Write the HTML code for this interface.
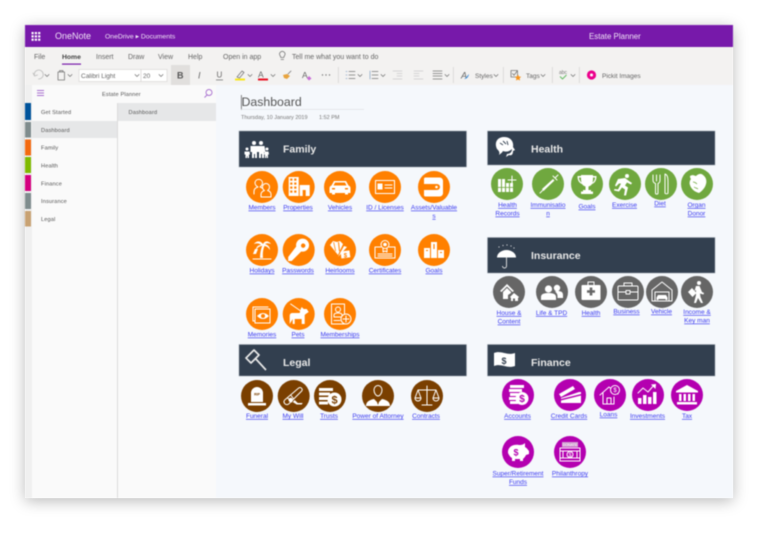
<!DOCTYPE html>
<html><head><meta charset="utf-8"><title>Estate Planner</title>
<style>
html,body{margin:0;padding:0;background:#fff;width:768px;height:533px;overflow:hidden}
#shadow{position:absolute;left:25px;top:25px;width:708px;height:473px;box-shadow:0 3px 14px rgba(0,0,0,.28)}
#root{position:absolute;left:0;top:0;width:768px;height:533px;filter:blur(.5px)}
svg{display:block}
text{font-family:"Liberation Sans",sans-serif}
.rb{font-size:7px;fill:#666}
.tb{font-size:6.5px;fill:#666}
.side{font-size:5.6px;fill:#555;letter-spacing:.15px}
.h{font-size:10.5px;font-weight:bold;fill:#e8e8e8}
.l{font-size:6.5px;fill:#3b3bf0;text-decoration:underline;text-anchor:middle}
.w{fill:#fff}
.s{fill:none;stroke:#fff;stroke-width:1;stroke-linecap:round;stroke-linejoin:round}
.c{fill:none;stroke:#777;stroke-width:.8;stroke-linecap:round;stroke-linejoin:round}
.o{fill:#ff8000}.b{fill:#7a3f00}.g{fill:#70a83f}.d{fill:#666}.m{fill:#b400b0}
</style></head><body>
<div id="shadow"></div>
<div id="root">
<svg width="768" height="533" viewBox="0 0 768 533" xmlns="http://www.w3.org/2000/svg">
<!-- window -->
<rect x="25" y="25" width="708" height="473" fill="#f5f8fc"/>
<rect x="25" y="25" width="708" height="22" fill="#7719aa"/>
<rect x="25" y="47" width="708" height="38" fill="#f3f2f1"/>
<!-- waffle -->
<g fill="#fff"><rect x="31.500" y="32" width="2.200" height="2.200"/><rect x="34.800" y="32" width="2.200" height="2.200"/><rect x="38.100" y="32" width="2.200" height="2.200"/><rect x="31.500" y="35.300" width="2.200" height="2.200"/><rect x="34.800" y="35.300" width="2.200" height="2.200"/><rect x="38.100" y="35.300" width="2.200" height="2.200"/><rect x="31.500" y="38.600" width="2.200" height="2.200"/><rect x="34.800" y="38.600" width="2.200" height="2.200"/><rect x="38.100" y="38.600" width="2.200" height="2.200"/></g>
<text x="55" y="39" font-size="9" fill="#f0e4f6">OneNote</text>
<text x="105" y="38.500" font-size="6.800" fill="#f0e4f6">OneDrive ▸ Documents</text>
<text x="589" y="39" font-size="7.900" fill="#f0e4f6">Estate Planner</text>
<!-- ribbon tabs -->
<text class="rb" x="34" y="59">File</text>
<text class="rb" x="62" y="59" style="fill:#444;font-weight:bold;font-size:6.800px">Home</text>
<rect x="62" y="63.500" width="19" height="1.200" fill="#7719aa"/>
<text class="rb" x="96" y="59">Insert</text>
<text class="rb" x="128" y="59">Draw</text>
<text class="rb" x="158" y="59">View</text>
<text class="rb" x="188" y="59">Help</text>
<text class="rb" x="223" y="59">Open in app</text>
<path class="c" d="M280 55.500a2.700 2.700 0 1 1 4.600 0c-.5.7-.8 1.200-.8 2h-3c0-.8-.3-1.300-.8-2zM281 59.500h2.600"/>
<text class="rb" x="292" y="59">Tell me what you want to do</text>
<!-- toolbar -->
<path class="c" d="M33 73l1.500 3 3-1M34.500 76a4.500 4.500 0 1 1 4 3" style="stroke:#bbb"/>
<path class="c" d="M45 74.500l2 2 2-2"/>
<path class="c" d="M58 72h6.500v8H58zM59.500 72v-1.300h3.500V72"/>
<path class="c" d="M68 74.500l2 2 2-2"/>
<rect x="79" y="69.500" width="62" height="12" fill="#fff" stroke="#d5d3d1" stroke-width=".6"/>
<text class="tb" x="81" y="78">Calibri Light</text>
<path class="c" d="M135 74.500l2 2 2-2"/>
<rect x="141" y="69.500" width="26" height="12" fill="#fff" stroke="#d5d3d1" stroke-width=".6"/>
<text class="tb" x="143" y="78">20</text>
<path class="c" d="M159 74.500l2 2 2-2"/>
<rect x="171" y="65" width="19" height="20" fill="#e1dfdd"/>
<text x="177" y="78.500" font-size="9" font-weight="bold" fill="#555">B</text>
<text x="198" y="78.500" font-size="9" font-style="italic" fill="#666">I</text>
<text x="216.500" y="77.500" font-size="8" fill="#666">U</text>
<rect x="216" y="79.500" width="7" height=".8" fill="#777"/>
<path class="c" d="M237 77l5-6 2 1.500-4.500 5.500z"/><rect x="235" y="78.500" width="10" height="2" fill="#f8e71c"/>
<path class="c" d="M248 74.500l2 2 2-2"/>
<text x="258" y="77.500" font-size="8.500" fill="#666">A</text><rect x="258" y="78.500" width="10" height="2" fill="#e81123"/>
<path class="c" d="M271 74.500l2 2 2-2"/>
<path d="M283 75l4-1 3 2-3 3-3-1z" fill="#e8a33d"/><path class="c" d="M288 74l3-3"/>
<text x="302" y="78" font-size="8.500" fill="#666">A</text><path d="M309 76l2.500 2.500-2.500 2-2-2z" fill="#c86dd7"/>
<g fill="#777"><circle cx="322.500" cy="75" r=".7"/><circle cx="326" cy="75" r=".7"/><circle cx="329.500" cy="75" r=".7"/></g>
<rect x="338" y="67" width=".7" height="16" fill="#d5d3d1"/>
<path class="c" style="stroke:#8fa9c9" d="M346 71.500h1M346 75h1M346 78.500h1"/><path class="c" d="M349 71.500h6M349 75h6M349 78.500h6"/>
<path class="c" d="M358 74.500l2 2 2-2"/>
<path class="c" style="stroke:#8fa9c9" d="M370 71v8"/><path class="c" d="M372 71.500h6M372 75h6M372 78.500h6"/>
<path class="c" d="M381 74.500l2 2 2-2"/>
<path class="c" style="stroke:#ccc" d="M393 71h9M397 73.500h5M397 76h5M393 79h9"/>
<path class="c" style="stroke:#ccc" d="M414 71h9M414 73.500h5M414 76h5M414 79h9"/>
<path class="c" d="M433 71h9M433 73.500h9M433 76h9M433 79h9"/>
<path class="c" d="M445 74.500l2 2 2-2"/>
<rect x="453" y="67" width=".7" height="16" fill="#d5d3d1"/>
<text x="461" y="78.500" font-size="9" font-style="italic" fill="#666">A</text><path d="M464 79c2-1 3-3 5-5-.5 3-2 5-5 5z" fill="#3d8ed8"/>
<text class="tb" x="475" y="78">Styles</text>
<path class="c" d="M494 74.500l2 2 2-2"/>
<rect x="503" y="67" width=".7" height="16" fill="#d5d3d1"/>
<path class="c" d="M511 70.500h6.500v6.500H511zM512.500 73.500l1.500 1.800 3-4"/><path d="M518 74.500l1 2 2.200.3-1.600 1.500.4 2.200-2-1-2 1 .4-2.200-1.600-1.500 2.200-.3z" fill="#f7941d"/>
<text class="tb" x="526" y="78">Tags</text>
<path class="c" d="M541 74.500l2 2 2-2"/>
<rect x="552" y="67" width=".7" height="16" fill="#d5d3d1"/>
<text x="559" y="74" font-size="5" fill="#777">abc</text><path d="M560 76.500l2.500 2.500 4-4" fill="none" stroke="#5cb85c" stroke-width=".9"/>
<path class="c" d="M571 74.500l2 2 2-2"/>
<rect x="579" y="67" width=".7" height="16" fill="#d5d3d1"/>
<circle cx="591.500" cy="75" r="4.600" fill="#ec008c"/><circle cx="591.500" cy="75" r="1.500" fill="#fff"/>
<text class="tb" x="602" y="78">Pickit Images</text>

<!-- side panels -->
<rect x="25" y="85" width="7" height="413" fill="#f0f0f0"/>
<rect x="32" y="85" width="184" height="413" fill="#fafafa"/>
<rect x="117" y="103" width="1" height="395" fill="#dcdcdc"/>
<rect x="25" y="103" width="6" height="17" fill="#00539b"/>
<rect x="25" y="122" width="6" height="15.500" fill="#7f8c8d"/>
<rect x="25" y="139.500" width="6" height="16" fill="#f36a10"/>
<rect x="25" y="157" width="6" height="16" fill="#7fba00"/>
<rect x="25" y="175" width="6" height="16" fill="#d4007f"/>
<rect x="25" y="193" width="6" height="16" fill="#7f8c8d"/>
<rect x="25" y="211" width="6" height="15.500" fill="#c8a273"/>
<path d="M37 90.500h7M37 93h7M37 95.500h7" stroke="#a86fcf" stroke-width=".9"/>
<text class="side" x="102" y="96">Estate Planner</text>
<circle cx="209" cy="92.500" r="3" fill="none" stroke="#a86fcf" stroke-width=".9"/><path d="M207 95l-2.500 2.500" stroke="#a86fcf" stroke-width=".9"/>
<rect x="32" y="121" width="85" height="17" fill="#e6e7e8"/>
<rect x="118" y="103" width="98" height="18" fill="#e6e7e8"/>
<text class="side" x="41" y="114">Get Started</text>
<text class="side" x="41" y="132">Dashboard</text>
<text class="side" x="41" y="149.500">Family</text>
<text class="side" x="41" y="167.500">Health</text>
<text class="side" x="41" y="185.500">Finance</text>
<text class="side" x="41" y="203">Insurance</text>
<text class="side" x="41" y="221">Legal</text>
<text class="side" x="128.500" y="114">Dashboard</text>

<!-- page title -->
<rect x="241" y="95" width=".7" height="15" fill="#555"/>
<text x="241.500" y="106" font-size="12.300" fill="#555">Dashboard</text>
<rect x="241" y="109" width="123" height=".7" fill="#dfe2e6"/>
<text x="241" y="119" font-size="5.500" fill="#777">Thursday, 10 January 2019</text>
<text x="319" y="119" font-size="5.500" fill="#777">1:52 PM</text>

<!-- FAMILY -->
<rect x="239" y="131" width="227.500" height="36" fill="#323f4f" stroke="#9aa3ad" stroke-width=".5"/>
<g class="w"><circle cx="254" cy="143" r="2"/><path d="M250.500 146h7l1 6h-1.500v6h-2v-4h-1v4h-2v-6h-1.500z"/><circle cx="261" cy="143" r="2"/><path d="M257.500 146h7l1 6h-1.500v6h-2v-4h-1v4h-2v-6h-1.500z"/><circle cx="247" cy="149" r="1.500"/><path d="M244.500 151.500h5l.5 3h-1v3.500h-1.500v-2h-.5v2H245.500v-3.500h-1z"/><circle cx="267" cy="149" r="1.500"/><path d="M264.500 151.500h4l.5 3h-1v3.500h-1.300v-2h-.5v2h-1.300v-3.500h-.9z"/></g>
<text class="h" x="283" y="152.500">Family</text>

<g transform="translate(262,187)"><circle r="16" class="o"/><path class="s" d="M-8 7v-2.500c0-2.500 2-4 4-4.500-2-1-3-2.500-3-4.500a3.800 3.800 0 0 1 7.500 0c0 2-1 3.500-2.500 4.500 1 .3 2 .8 2.500 1.500"/><path class="s" d="M-1 10v-2.500c0-2.500 2-3.500 3.500-4-1.300-.8-2-2-2-3.500a3.500 3.500 0 0 1 7 0c0 1.500-.7 2.700-2 3.500 1.800.5 3.500 1.500 3.500 4V10z"/></g>
<g transform="translate(298.700,187)"><circle r="16" class="o"/><path class="w" d="M-10-10H0v19h-10zM1-2H11V9H7V3H4v6H1z"/><g class="o"><rect x="-8.500" y="-8.500" width="2.200" height="2.200"/><rect x="-4.500" y="-8.500" width="2.200" height="2.200"/><rect x="-8.500" y="-4.500" width="2.200" height="2.200"/><rect x="-4.500" y="-4.500" width="2.200" height="2.200"/><rect x="-8.500" y="-.5" width="2.200" height="2.200"/><rect x="-4.500" y="-.5" width="2.200" height="2.200"/><rect x="-8.500" y="3.500" width="2.200" height="2.200"/><rect x="-4.500" y="3.500" width="2.200" height="2.200"/></g></g>
<g transform="translate(340,187)"><circle r="16" class="o"/><path class="w" d="M-6-6h12l2.500 4.500c1.500.5 2 1.500 2 3V6H8v1.500H5V6H-5v1.500H-8V6h-2.500V1.500c0-1.500.5-2.500 2-3z"/><path class="o" d="M-5-4.500H5L6.500-1.500h-13zM-8 1h3v1.500h-3zM5 1h3v1.500H5z"/></g>
<g transform="translate(385,187)"><circle r="16" class="o"/><rect x="-9.500" y="-6.500" width="19" height="13" class="s"/><path class="w" d="M-7.500-3.500h5v6h-5z"/><path class="s" d="M0-2h7M0 1h7"/></g>
<g transform="translate(434,187)"><circle r="16" class="o"/><path class="w" d="M-10-8q0-1.500 1.500-1.500h14c2 0 3.500 1.500 3.500 3.500v12c0 2-1.500 3.500-3.500 3.500h-14q-1.500 0-1.500-1.500z"/><path class="o" d="M-10-3H3a3 3 0 0 1 0 6h-13z" stroke="#fff" stroke-width="0"/><circle cx="2.500" r="1.300" class="w"/></g>
<text class="l" x="262" y="209.500">Members</text>
<text class="l" x="298" y="209.500">Properties</text>
<text class="l" x="340" y="209.500">Vehicles</text>
<text class="l" x="385" y="209.500">ID / Licenses</text>
<text class="l" x="434" y="209.500">Assets/Valuable</text>
<text class="l" x="434" y="218">s</text>

<g transform="translate(262,250)"><circle r="16" class="o"/><path class="w" d="M-2 8C-2 3-1-2 1-6L3-5C1-1 .5 3 1 8zM1-6C-2-10-6-9-8-6-5-7-3-7-1-5-4-5-6-3-6 0-4-3-2-4 0-4zM1-6C3-10 7-9 9-6 6-7 5-7 3-6 6-5 8-3 8 0 6-3 4-4 2-4z"/><path class="s" d="M-9 9H9"/><path class="w" d="M-7-1h3l-2 5h-3z"/></g>
<g transform="translate(298.700,250)"><circle r="16" class="o"/><path class="w" d="M-2.500-3.500a6.500 6.500 0 1 1 5 5L-7 11h-3.500V7zM3-6a2.200 2.200 0 1 0 3.500 2.500A2.200 2.200 0 0 0 3-6z" fill-rule="evenodd"/></g>
<g transform="translate(340,250)"><circle r="16" class="o"/><path class="w" d="M-10-5l3-4 4 1 3-1 3 3-5 11zM-2 7L4-4l3 1z"/><path class="o" d="M-6-8l2 9-.7.2-2-9zM-1-8l1 9-1 .3-1-9z"/><rect x="1" y="1" width="9" height="7" class="w" transform="rotate(-8 5 5)"/><text x="3.800" y="7.500" font-size="6" font-weight="bold" fill="#ff8000">$</text></g>
<g transform="translate(385,250)"><circle r="16" class="o"/><path class="s" d="M-10-3H-4M4-3H10V8H-10V-3"/><circle cy="-5.500" r="4" class="s"/><circle cy="-5.500" r="1.800" class="w"/><path class="s" d="M-2-2v4L0 1l2 1v-4M-7 4H7M-7 6H7"/></g>
<g transform="translate(434,250)"><circle r="16" class="o"/><path class="w" d="M-3-8H3V8H-3zM-10-2H-4V8H-10zM4 0H10V8H4z"/><g fill="#ff8000"><rect x="-.6" y="-6" width="1.200" height="5"/><rect x="-8" y="0" width="2" height="1"/><rect x="6" y="2" width="2" height="1"/></g></g>
<text class="l" x="262" y="272.500">Holidays</text>
<text class="l" x="298" y="272.500">Passwords</text>
<text class="l" x="340" y="272.500">Heirlooms</text>
<text class="l" x="385" y="272.500">Certificates</text>
<text class="l" x="434" y="272.500">Goals</text>

<g transform="translate(262,314)"><circle r="16" class="o"/><path class="s" d="M-9-7H6M-9-7V7M-9 7h2"/><rect x="-7" y="-5" width="15" height="14" class="s"/><path class="w" d="M-5 2Q1-4 7 2 1 8-5 2z"/><circle cx="1" cy="2" r="2" class="o"/></g>
<g transform="translate(298.700,314)"><circle r="16" class="o"/><path class="w" d="M-9 10V2c0-2 1-3 3-3H1L2-5 3-7 5-5H8L10-2 7 0 6 1V10H3V5H-4V10H-6V5L-9 10z"/><path class="s" d="M-8-10L2-3"/></g>
<g transform="translate(340,314)"><circle r="16" class="o"/><rect x="-8.500" y="-10" width="13" height="20" class="s"/><circle cx="-2" cy="-4.500" r="2.500" class="s"/><path class="s" d="M-6 3v-2c0-1.500 2-2 4-2s4 .5 4 2v2zM-6 6.500H0"/><circle cx="6" cy="5" r="5" fill="#ff8000" stroke="#fff" stroke-width="1"/><path class="s" d="M3 5h6M6 2v6"/></g>
<text class="l" x="262" y="336.500">Memories</text>
<text class="l" x="298" y="336.500">Pets</text>
<text class="l" x="340" y="336.500">Memberships</text>

<!-- LEGAL -->
<rect x="239" y="344.500" width="227.500" height="31.500" fill="#323f4f" stroke="#9aa3ad" stroke-width=".5"/>
<path d="M246 358l8-8 5 5-8 8zM255 358l11 12" fill="none" stroke="#e8e8e8" stroke-width="1.700" stroke-linejoin="round"/>
<text class="h" x="283" y="366">Legal</text>

<g transform="translate(257,396)"><circle r="16" class="b"/><path class="w" d="M-6 6V-3a6 6 0 0 1 12 0V6zM-9 7H9v2.500H-9z"/><text x="0" y="-.5" font-size="3.500" font-weight="bold" fill="#7a3f00" text-anchor="middle">RIP</text></g>
<g transform="translate(293.700,396)"><circle r="16" class="b"/><path class="s" d="M-9 4L5-8c2-1.500 4.500 1 3 3L-5 8c-3 2-6-1.500-4-4zM-6 2l4 4M-3-1l3 4"/><path class="w" d="M-1 6l2-2 3 3 5 0-1 1.500-5 0z"/><circle cx="-3" cy="4" r="2.200" class="w"/></g>
<g transform="translate(330,396)"><circle r="16" class="b"/><path class="w" d="M-11-8H3v3h-14zM-11-3.500H0v3h-11zM-11 1H-2v3h-9zM-11 5.500H-2v3h-9z"/><circle cx="4.500" cy="3.500" r="7" class="w"/><text x="4.500" y="7.500" font-size="11" font-weight="bold" fill="#7a3f00" text-anchor="middle">$</text></g>
<g transform="translate(378,396)"><circle r="16" class="b"/><path class="s" d="M-4-6a4 4.500 0 0 1 8 0c0 3-2 6-4 6s-4-3-4-6z" stroke-width="1.200"/><path class="w" d="M-12 10c0-4 3-6 8-7l4 4 4-4c5 1 8 3 8 7z"/><path class="b" d="M-1 6h2L0 9z"/></g>
<g transform="translate(427,396)"><circle r="16" class="b"/><path class="s" d="M0-10V9M-5 9H5M-9-6H9M-9-6l-3 8M-9-6l3 8M9-6l-3 8M9-6l3 8M-12 2a3 3 0 0 0 6 0zM6 2a3 3 0 0 0 6 0z" stroke-width=".9"/></g>
<text class="l" x="257" y="418">Funeral</text>
<text class="l" x="293" y="418">My Will</text>
<text class="l" x="329" y="418">Trusts</text>
<text class="l" x="378" y="418">Power of Attorney</text>
<text class="l" x="426" y="418">Contracts</text>

<!-- HEALTH -->
<rect x="487.500" y="131" width="227.500" height="34" fill="#323f4f" stroke="#9aa3ad" stroke-width=".5"/>
<g transform="translate(0,2)"><path class="w" d="M497 147c-3-6 0-12 7-12 6 0 10 4 9 10l2 3-2 1c0 3-1 5-4 4l-3 2 1-3c3 0 5-2 5-5-3 3-7 3-9 2-1 2-3 3-4 4 1-3 0-4-2-6z"/><path d="M500 141l3 2M503 139l3 3M507 139l1 4" stroke="#323f4f" stroke-width=".9" fill="none"/></g>
<text class="h" x="531" y="152.500">Health</text>

<g transform="translate(507,184)"><circle r="16" class="g"/><path class="w" d="M-9-5h3v13h-3zM-5-5h3v13h-3zM-1-1h3V8h-3zM3-1h3V8H3z"/><g fill="#70a83f"><rect x="-9" y="3" width="7" height=".8"/><rect x="-1" y="3" width="7" height=".8"/></g><path class="s" d="M5-8V0M1-4H9" stroke-width="1.600"/></g>
<g transform="translate(548,184)"><circle r="16" class="g"/><path class="w" d="M-6 5L5-5 6.500-3.500-4.500 7z"/><path class="s" d="M5-8l4 4M7-6l3-3M-5 6l-3 3" stroke-width=".9"/></g>
<g transform="translate(587,184)"><circle r="16" class="g"/><path class="w" d="M-6-9H6v1h3.500c0 5-2 7-4.500 8-1 1.500-2 2-3.500 2.500V6H4v1.500h2V10H-6V7.500h2V6h2.500V2.500C-3 2-4 1.500-5 0c-2.500-1-4.500-3-4.500-8H-6zM-8-6.500c0 2 1 4 2.500 5C-6-3-6-5-6-6.500zM8-6.500H6c0 1.500 0 3.500-.5 5C7-2.500 8-4.500 8-6.500z" fill-rule="evenodd"/></g>
<g transform="translate(625,184)"><circle r="16" class="g"/><circle cx="2" cy="-8" r="2" class="w"/><path class="w" d="M-7-5l7-1 4 3 3 2-1 1.500-4-2-2 3 3 2-2 8H-1l1-6-3-2-3 4-5-1 .5-1.500 3.500.5 3-6-2 0-3 3-1-1z"/></g>
<g transform="translate(661,184)"><circle r="16" class="g"/><path class="s" d="M-8-9v5c0 2 1 3 2.500 3.500V9c0 1.500 2.500 1.500 2.500 0V-.5C-1.500-1-1-2-1-4V-9M-4.500-9v6" stroke-width=".9"/><path class="s" d="M4-10c3 1 3 5 3 9v10c0 1-3 1-3 0z" stroke-width="1.100"/></g>
<g transform="translate(697,184)"><circle r="16" class="g"/><path class="w" d="M-7-8c3-2 5 0 6 0 2-2 5-3 7-1 3 2 4 6 3 9-1 4-4 7-7 9-4-1-8-4-9-8-1-2 0-5 1-6-1-1-1-2-1-3z"/><path d="M-3 3c1 1 3 1 4 2M-4-2c2 0 3 1 4 2" stroke="#70a83f" stroke-width=".7" fill="none"/></g>
<text class="l" x="507.500" y="207">Health</text>
<text class="l" x="507.500" y="215.500">Records</text>
<text class="l" x="548" y="207">Immunisatio</text>
<text class="l" x="548" y="215.500">n</text>
<text class="l" x="587" y="208.500">Goals</text>
<text class="l" x="624.500" y="207">Exercise</text>
<text class="l" x="660" y="205.500">Diet</text>
<text class="l" x="696.500" y="207">Organ</text>
<text class="l" x="696.500" y="215.500">Donor</text>

<!-- INSURANCE -->
<rect x="487.500" y="237.500" width="227.500" height="35.500" fill="#323f4f" stroke="#9aa3ad" stroke-width=".5"/>
<path class="w" d="M497 257.500a9.500 7.500 0 0 1 19 0z"/><path d="M506.500 257v9a2 2 0 0 1-4 0" fill="none" stroke="#e8e8e8" stroke-width=".9"/>
<g fill="#ddd"><circle cx="499" cy="247" r=".6"/><circle cx="503" cy="245.500" r=".6"/><circle cx="507" cy="245" r=".6"/><circle cx="511" cy="246" r=".6"/><circle cx="514" cy="248" r=".6"/></g>
<text class="h" x="531" y="259">Insurance</text>

<g transform="translate(509,292)"><circle r="16" class="d"/><path class="w" d="M-9-1L-2-8 5-1l-1.500 1L-2-5.500-7.500 0zM-6 0L-2-4 2 0v1L-1 3V7H-6zM1 5l4-4 5 4-1 1V9H2V6z"/><rect x="4" y="6.500" width="2" height="2.500" class="d"/></g>
<g transform="translate(552,292)"><circle r="16" class="d"/><circle cx="-3.500" cy="-3" r="3.600" class="w"/><circle cx="5" cy="-4" r="3.200" class="w"/><path class="w" d="M-11 8V5c0-3 3-4 7.500-4S4 2 4 5v3zM5.500 6V4C5.500 2 4.500 1 3-.5 4-1 4.500-1 5.500-1 9-1 11 0 11 3v3z"/></g>
<g transform="translate(591,292)"><circle r="16" class="d"/><path class="s" d="M-3-7V-10H3V-7"/><rect x="-9.500" y="-7" width="19" height="15" rx="1" class="w"/><path class="d" d="M-1.300-4.500h2.600v2.700H4v2.600H1.300v2.700H-1.300V.8H-4V-1.800h2.700z" fill="#666"/></g>
<g transform="translate(628,292)"><circle r="16" class="d"/><rect x="-10" y="-6" width="20" height="14" rx="1" class="s"/><path class="s" d="M-4-6V-9H4V-6M-10 0H-2M2 0H10"/><rect x="-2" y="-1.500" width="4" height="3.500" class="s"/></g>
<g transform="translate(662,292)"><circle r="16" class="d"/><path class="s" d="M-10-2L0-10 10-2V9H-10zM-7 9V0H7V9"/><path class="w" d="M-4 3h8l1.500 2.500V8H3.500V7H-3.500v1H-5.500V5.500z"/></g>
<g transform="translate(697,292)"><circle r="16" class="d"/><circle cx="2" cy="-9" r="2" class="w"/><path class="w" d="M-1-6h3.500L5 0l2 1-.5 1.500L3 1.500 3.500 5 6 11H4L1 6 -1 11h-2L-1 3v-5l-1.500 1zM-9 0l4-4 4.500 5-4 4z"/></g>
<text class="l" x="509" y="315">House &amp;</text>
<text class="l" x="509" y="323.500">Content</text>
<text class="l" x="551.500" y="315">Life &amp; TPD</text>
<text class="l" x="591" y="315">Health</text>
<text class="l" x="626.500" y="313.500">Business</text>
<text class="l" x="661.500" y="313.500">Vehicle</text>
<text class="l" x="697" y="314">Income &amp;</text>
<text class="l" x="697" y="322.500">Key man</text>

<!-- FINANCE -->
<rect x="487.500" y="344.500" width="227.500" height="31.500" fill="#323f4f" stroke="#9aa3ad" stroke-width=".5"/>
<path class="w" d="M494 353c7-3 13 3 21 0v13c-8 3-14-3-21 0z"/><text x="501.500" y="364" font-size="9" font-weight="bold" fill="#323f4f">$</text>
<text class="h" x="531" y="366">Finance</text>

<g transform="translate(518,395)"><circle r="16" class="m"/><path class="w" d="M-8-10H6v3h-14zM-9-6H4v3h-13zM-8-2H0v3h-8zM-9 2h8v3h-8zM-8 6h8v3h-8z"/><circle cx="4" cy="3.500" r="6.500" class="w"/><text x="4" y="7" font-size="10" font-weight="bold" fill="#b400b0" text-anchor="middle">$</text></g>
<g transform="translate(570,395)"><circle r="16" class="m"/><path class="w" d="M-11-1L3-9 5-6-9 2zM-9 3L9-3h2V8H-9z"/><path fill="#b400b0" d="M-9 4L11-1v1.500L-9 5.500z"/></g>
<g transform="translate(610,395)"><circle r="16" class="m"/><path class="s" d="M-10 0L-1-8 8-1M-7-2V9H4V2M-3 9V3H1V9" stroke-width="1.100"/><circle cx="5" cy="-5" r="4.500" fill="#b400b0" stroke="#fff" stroke-width="1"/><text x="5" y="-3" font-size="6" fill="#fff" text-anchor="middle">$</text></g>
<g transform="translate(648,395)"><circle r="16" class="m"/><path class="w" d="M-10 3h3.500v6H-10zM-5 0h3.500v9H-5zM0 2h3.500v7H0zM5-3h3.500V9H5z"/><path class="s" d="M-10-2l5-5 5 4 6-7" stroke-width="1.300"/><path class="w" d="M3-10.500l5-.5-.5 5z"/></g>
<g transform="translate(687,395)"><circle r="16" class="m"/><path class="w" d="M0-10L11-4v1.500H-11V-4zM-10 7H10v2.500H-10zM-8-1h2.500v7H-8zM-3.500-1H-1v7h-2.500zM1-1h2.500v7H1zM5.500-1H8v7H5.500z"/></g>
<text class="l" x="517.500" y="418">Accounts</text>
<text class="l" x="569" y="418">Credit Cards</text>
<text class="l" x="608.500" y="416.500">Loans</text>
<text class="l" x="647.500" y="418">Investments</text>
<text class="l" x="687" y="418">Tax</text>

<g transform="translate(518,452)"><circle r="16" class="m"/><path class="w" d="M-10-1c1-5 6-7 11-6 2 0 4 0 6-2l0 4c2 1 3 3 4 4v3l-3 1c-1 2-2 3-3 4l0 2H2V7H-3v2H-6V6c-2-1-3-3-4-5z"/><text x="-4.500" y="3.500" font-size="9" font-weight="bold" fill="#b400b0">$</text></g>
<g transform="translate(570,452)"><circle r="16" class="m"/><rect x="-10" y="-4" width="20" height="13" class="s"/><rect x="-8" y="-10" width="16" height="5" fill="#d0a0d0"/><text y="-6" font-size="3.600" fill="#fff" text-anchor="middle">DONATE</text><path class="s" d="M-10-1H10M-10 6H10M-7-1V6M7-1V6"/><circle cy="2.500" r="3" class="s"/><text y="4.500" font-size="5" fill="#fff" text-anchor="middle">$</text></g>
<text class="l" x="518" y="475.500">Super/Retirement</text>
<text class="l" x="518" y="484">Funds</text>
<text class="l" x="570" y="475.500">Philanthropy</text>
</svg>
</div>
</body></html>
